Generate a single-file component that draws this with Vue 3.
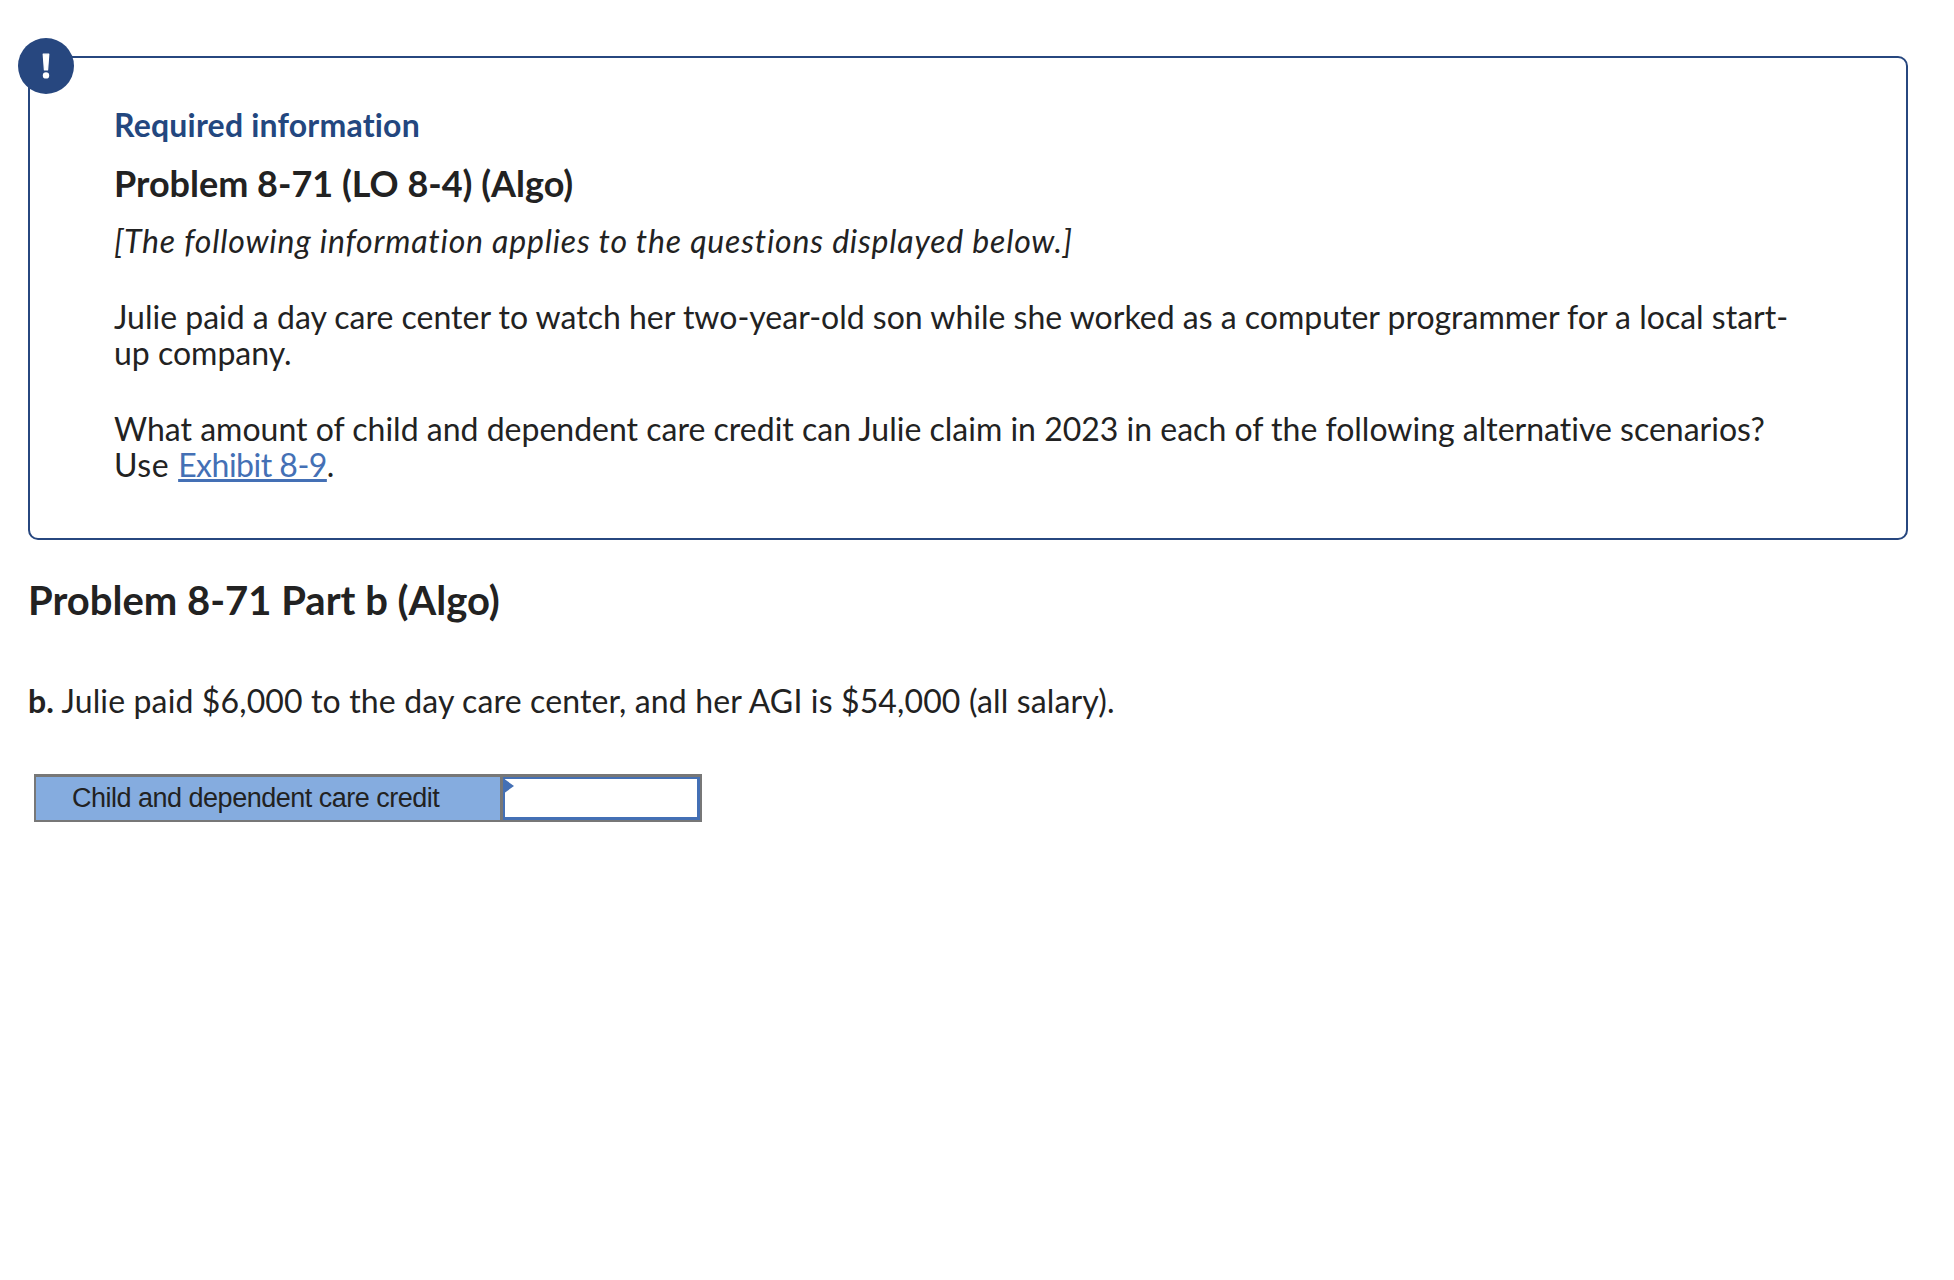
<script setup>
const title = 'Problem 8-71 (LO 8-4) (Algo)'
</script>

<template>
  <main class="page">
    <section class="notice">
      <div class="badge" aria-hidden="true">
        <svg width="8" height="26" viewBox="0 0 8 26">
          <path d="M1.2 1.2h5.6L5.6 17H2.4z" fill="#fff" stroke="#fff" stroke-width="1.2" stroke-linejoin="round" />
          <circle cx="4" cy="22.4" r="3.2" fill="#fff" />
        </svg>
      </div>
      <h2 class="req">Required information</h2>
      <h3 class="title">{{ title }}</h3>
      <p class="lead">[The following information applies to the questions displayed below.]</p>
      <p class="para">Julie paid a day care center to watch her two-year-old son while she worked as a computer programmer for a local start-<br />up company.</p>
      <p class="para">What amount of child and dependent care credit can Julie claim in 2023 in each of the following alternative scenarios?<br /><span class="use">Use </span><a class="link" href="#">Exhibit 8-9</a>.</p>
    </section>

    <h1 class="part">Problem 8-71 Part b (Algo)</h1>
    <p class="question"><b>b.</b> Julie paid $6,000 to the day care center, and her AGI is $54,000 (all salary).</p>

    <div class="answer">
      <div class="label">Child and dependent care credit</div>
      <div class="cell"><span class="flag"></span></div>
    </div>
  </main>
</template>

<style scoped>
.page {
  width: 1880px;
  padding: 56px 0 0 28px;
  font-family: Lato, "Open Sans", sans-serif;
  font-variant-ligatures: none;
  color: #222;
}
.notice {
  position: relative;
  box-sizing: border-box;
  height: 484px;
  padding: 49px 40px 0 84px;
  border: 2px solid #27477f;
  border-radius: 10px;
}
.badge {
  position: absolute;
  left: -12px;
  top: -20px;
  width: 56px;
  height: 56px;
  border-radius: 50%;
  background: #27477f;
  display: flex;
  align-items: center;
  justify-content: center;
}
.req {
  margin: 0;
  font-size: 32px;
  line-height: 36px;
  font-weight: 700;
  letter-spacing: 0.2px;
  color: #23477f;
}
.title {
  margin: 22px 0 0;
  font-size: 36px;
  line-height: 36px;
  font-weight: 700;
}
.lead {
  margin: 22px 0 0;
  font-size: 32px;
  line-height: 36px;
  font-style: italic;
  letter-spacing: 0.8px;
}
.para {
  margin: 40px 0 0;
  font-size: 32px;
  line-height: 36px;
}
.use {
  letter-spacing: 0.6px;
}
.link {
  color: #4470b5;
  text-decoration: underline;
  letter-spacing: -0.5px;
}
.part {
  margin: 38px 0 0;
  font-size: 40px;
  line-height: 44px;
  font-weight: 700;
}
.question {
  margin: 61px 0 0;
  font-size: 32px;
  line-height: 36px;
  letter-spacing: 0.14px;
}
.answer {
  display: flex;
  width: 668px;
  height: 48px;
  margin: 55px 0 0 6px;
  box-sizing: border-box;
  border: 2px solid #777;
  border-top-width: 3px;
  background: #85acdf;
}
.label {
  box-sizing: border-box;
  width: 467px;
  padding-left: 36px;
  font-family: "Liberation Sans", sans-serif;
  font-size: 27px;
  letter-spacing: -0.5px;
  line-height: 42px;
  color: #222;
  border-right: 3px solid #777;
}
.cell {
  position: relative;
  flex: 1;
  background: #fff;
  border: 3px solid #4470b5;
  border-width: 2px 3px 3px 2px;
}
.flag {
  position: absolute;
  left: -2px;
  top: -1px;
  width: 11px;
  height: 16px;
  background: #4470b5;
  clip-path: polygon(0 0, 100% 50%, 0 100%);
}
</style>

<style>
body { background: #fff; }
</style>
